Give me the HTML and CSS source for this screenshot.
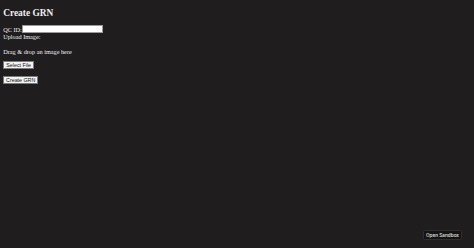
FILE: index.html
```html
<!DOCTYPE html>
<html>
<head>
<meta charset="utf-8">
<link rel="stylesheet" href="styles.css">
</head>
<body>
<div class="page">
  <h2 class="title">Create GRN</h2>
  <div class="field-row">
    <label class="label">QC ID:</label><input class="text-input" type="text">
  </div>
  <div class="upload">
    <label class="label block">Upload Image:</label>
    <div class="dropzone">
      <p class="drop-text">Drag &amp; drop an image here</p>
      <button class="btn select">Select File</button>
    </div>
  </div>
  <button class="btn submit">Create GRN</button>
</div>
<a class="sandbox-btn">Open Sandbox</a>
</body>
</html>
```
FILE: styles.css
```css
html, body {
  margin: 0;
  padding: 0;
  background: #1f1d1e;
  height: 100%;
  overflow: hidden;
}
.page {
  display: flex;
  flex-direction: column;
  align-items: flex-start;
  padding: 0 0 0 3.2px;
  color: #f0f0f0;
  font-family: "Liberation Serif", "Times New Roman", serif;
  font-size: 6.25px;
}
.title {
  font-size: 9.4px;
  line-height: 10px;
  font-weight: bold;
  margin: 7.5px 0 0;
}
.field-row {
  display: flex;
  align-items: center;
  height: 8px;
  line-height: 8px;
  margin-top: 7.8px;
}
.label {
  line-height: 7px;
}
.block {
  display: block;
}
.text-input {
  width: 81.5px;
  height: 8px;
  box-sizing: border-box;
  padding: 0;
  margin: 0;
  border: 1px solid #9a9a9a;
  background: #ffffff;
  outline: none;
}
.upload {
  display: flex;
  flex-direction: column;
  align-items: flex-start;
}
.dropzone {
  display: flex;
  flex-direction: column;
  align-items: flex-start;
}
.drop-text {
  margin: 7.4px 0 0;
  line-height: 7px;
}
.btn {
  font-family: "Liberation Sans", Arial, sans-serif;
  font-size: 5.3px;
  line-height: 1;
  color: #111;
  background: #f2f2f2;
  border: 1px solid #7a7a7a;
  border-radius: 0;
  height: 8px;
  padding: 0;
  margin: 6.6px 0 0;
  box-sizing: border-box;
  display: flex;
  align-items: center;
  justify-content: center;
  outline: none;
}
.select {
  width: 31px;
}
.submit {
  width: 35px;
  margin-top: 7px;
}
.sandbox-btn {
  position: fixed;
  right: 12px;
  bottom: 8px;
  width: 39px;
  height: 10px;
  box-sizing: border-box;
  display: flex;
  align-items: center;
  justify-content: center;
  background: #141414;
  border: 0.5px solid #2e2e2e;
  border-radius: 1.5px;
  color: #e6e6e6;
  font-family: Inter, "Liberation Sans", sans-serif;
  font-size: 4.7px;
  font-weight: 500;
}
```
